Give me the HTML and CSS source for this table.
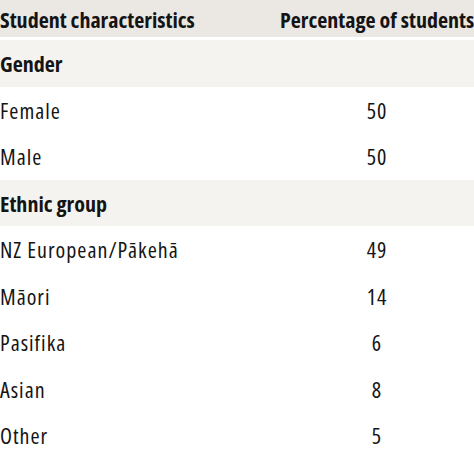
FILE: index.html
```html
<!DOCTYPE html>
<html>
<head>
<meta charset="utf-8">
<link rel="stylesheet" href="styles.css">
</head>
<body>
<div class="table">
  <div class="row head"><div class="c1">Student characteristics</div><div class="c2">Percentage of students</div></div>
  <div class="row group"><div class="c1">Gender</div><div class="c2"></div></div>
  <div class="row"><div class="c1">Female</div><div class="c2">50</div></div>
  <div class="row"><div class="c1">Male</div><div class="c2">50</div></div>
  <div class="row group"><div class="c1">Ethnic group</div><div class="c2"></div></div>
  <div class="row"><div class="c1">NZ European/Pākehā</div><div class="c2">49</div></div>
  <div class="row"><div class="c1">Māori</div><div class="c2">14</div></div>
  <div class="row"><div class="c1">Pasifika</div><div class="c2">6</div></div>
  <div class="row"><div class="c1">Asian</div><div class="c2">8</div></div>
  <div class="row"><div class="c1">Other</div><div class="c2">5</div></div>
</div>
</body>
</html>
```
FILE: styles.css
```css
html, body { margin: 0; padding: 0; background: #fff; }
body { width: 474px; height: 451px; overflow: hidden; font-family: "Open Sans", sans-serif; font-stretch: 75%; color: #141414; font-size: 22px; letter-spacing: 1px; }
.table { display: flex; flex-direction: column; }
.row { display: grid; grid-template-columns: 280px 194px; align-items: center; height: 46.5px; }
.row.head { height: 37px; background: #ebe7e3; font-weight: bold; letter-spacing: 0; margin-bottom: 3px; }
.row.group { background: #f5f3ef; font-weight: bold; letter-spacing: 0; }
.c1 { white-space: nowrap; }
.c2 { text-align: center; white-space: nowrap; }
```
